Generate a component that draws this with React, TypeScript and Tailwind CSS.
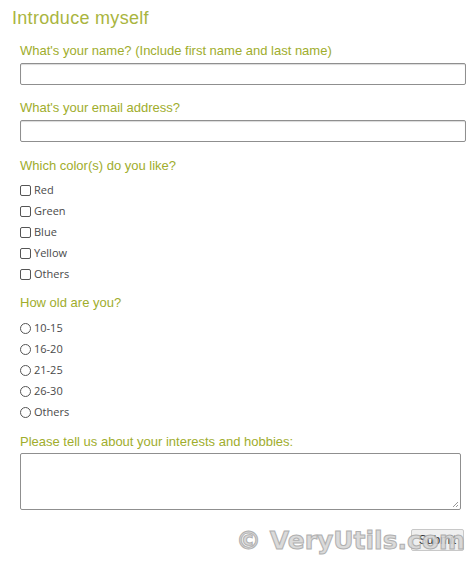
import React from "react";

const colors = ["Red", "Green", "Blue", "Yellow", "Others"];
const ages = ["10-15", "16-20", "21-25", "26-30", "Others"];

export default function App() {
  const label = "text-[13px] leading-[15px] text-[#a0ad2c]";
  const opt = "flex items-center h-[21px] text-[11px] text-[#4a4a4a] [font-family:'Open_Sans','DejaVu_Sans',sans-serif]";
  const input = "h-[22px] border border-[#8f8f8f] rounded-[2px] shadow-[inset_0_1px_1px_rgba(0,0,0,0.15)]";
  return (
    <div className="relative w-[474px] h-[562px] bg-white overflow-hidden [font-family:'Liberation_Sans',Arial,sans-serif]">
      <div className="pl-[12px] pt-[7px] text-[18px] leading-[22px] text-[#a9b53e] tracking-[0.3px]">
        Introduce myself
      </div>
      <div className="pl-[20px] pr-[8px]">
        <div className={`${label} mt-[14px]`}>What's your name? (Include first name and last name)</div>
        <div className={`${input} mt-[5px]`} />
        <div className={`${label} mt-[15px]`}>What's your email address?</div>
        <div className={`${input} mt-[5px]`} />
        <div className={`${label} mt-[16px]`}>Which color(s) do you like?</div>
        <div className="mt-[7px] flex flex-col">
          {colors.map((c) => (
            <div key={c} className={opt}>
              <span className="w-[11px] h-[11px] border border-[#555] rounded-[2px] mr-[3px]" />
              <span>{c}</span>
            </div>
          ))}
        </div>
        <div className={`${label} mt-[10px]`}>How old are you?</div>
        <div className="mt-[8px] flex flex-col">
          {ages.map((a) => (
            <div key={a} className={opt}>
              <span className="w-[11px] h-[11px] border border-[#555] rounded-full mr-[3px]" />
              <span>{a}</span>
            </div>
          ))}
        </div>
        <div className={`${label} mt-[11px]`}>Please tell us about your interests and hobbies:</div>
        <div className="relative mt-[4px] h-[57px] w-[441px] border border-[#8f8f8f] rounded-[2px]">
          <svg className="absolute right-[1px] bottom-[1px]" width="7" height="7" viewBox="0 0 7 7">
            <path d="M6 1 L1 6 M6 4 L4 6" stroke="#999" strokeWidth="1" />
          </svg>
        </div>
        <div className="flex justify-end mt-[19px] pr-[2px]">
          <div className="w-[53px] h-[22px] border border-[#c8c8c8] rounded-[2px] bg-[#efefef] text-[12px] text-[#333] flex items-center justify-center">
            Submit
          </div>
        </div>
      </div>
      <div className="absolute left-[236px] top-[524px] text-[25px] leading-[34px] font-bold text-[#d6d6d6] [-webkit-text-stroke:1px_#a8a8a8] [font-family:'DejaVu_Sans','Liberation_Sans',sans-serif] opacity-90 whitespace-nowrap">
        © VeryUtils.com
      </div>
    </div>
  );
}
